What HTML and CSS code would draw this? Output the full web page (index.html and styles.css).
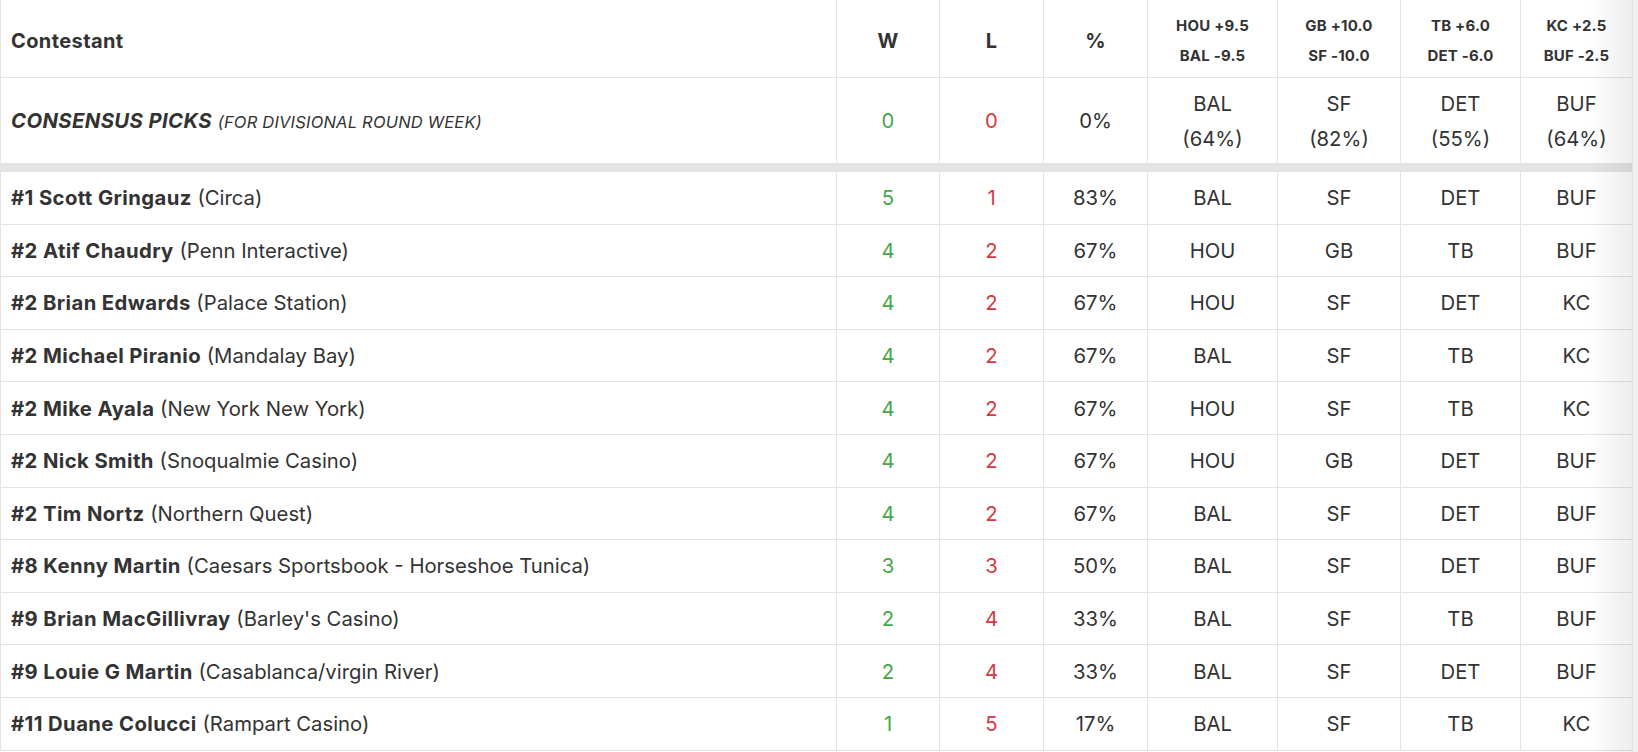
FILE: index.html
```html
<!DOCTYPE html>
<html>
<head>
<meta charset="utf-8">
<link rel="stylesheet" href="styles.css">
</head>
<body>
<div class="page">
  <div class="scroller">
    <table class="board">
      <colgroup>
        <col class="c-name"><col class="c-w"><col class="c-l"><col class="c-p">
        <col class="c-g1"><col class="c-g2"><col class="c-g3"><col class="c-g4">
      </colgroup>
      <thead>
        <tr class="head">
          <th class="name">Contestant</th>
          <th>W</th>
          <th>L</th>
          <th>%</th>
          <th class="line"><span>HOU +9.5</span><span>BAL -9.5</span></th>
          <th class="line"><span>GB +10.0</span><span>SF -10.0</span></th>
          <th class="line"><span>TB +6.0</span><span>DET -6.0</span></th>
          <th class="line"><span>KC +2.5</span><span>BUF -2.5</span></th>
        </tr>
      </thead>
      <tbody>
        <tr class="consensus">
          <td class="name"><b>CONSENSUS PICKS</b> <small>(FOR DIVISIONAL ROUND WEEK)</small></td>
          <td class="win">0</td>
          <td class="loss">0</td>
          <td>0%</td>
          <td class="pick2"><span>BAL</span><span>(64%)</span></td>
          <td class="pick2"><span>SF</span><span>(82%)</span></td>
          <td class="pick2"><span>DET</span><span>(55%)</span></td>
          <td class="pick2"><span>BUF</span><span>(64%)</span></td>
        </tr>
        <tr><td class="name"><b>#1 Scott Gringauz</b> (Circa)</td><td class="win">5</td><td class="loss">1</td><td>83%</td><td>BAL</td><td>SF</td><td>DET</td><td>BUF</td></tr>
        <tr><td class="name"><b>#2 Atif Chaudry</b> (Penn Interactive)</td><td class="win">4</td><td class="loss">2</td><td>67%</td><td>HOU</td><td>GB</td><td>TB</td><td>BUF</td></tr>
        <tr><td class="name"><b>#2 Brian Edwards</b> (Palace Station)</td><td class="win">4</td><td class="loss">2</td><td>67%</td><td>HOU</td><td>SF</td><td>DET</td><td>KC</td></tr>
        <tr><td class="name"><b>#2 Michael Piranio</b> (Mandalay Bay)</td><td class="win">4</td><td class="loss">2</td><td>67%</td><td>BAL</td><td>SF</td><td>TB</td><td>KC</td></tr>
        <tr><td class="name"><b>#2 Mike Ayala</b> (New York New York)</td><td class="win">4</td><td class="loss">2</td><td>67%</td><td>HOU</td><td>SF</td><td>TB</td><td>KC</td></tr>
        <tr><td class="name"><b>#2 Nick Smith</b> (Snoqualmie Casino)</td><td class="win">4</td><td class="loss">2</td><td>67%</td><td>HOU</td><td>GB</td><td>DET</td><td>BUF</td></tr>
        <tr><td class="name"><b>#2 Tim Nortz</b> (Northern Quest)</td><td class="win">4</td><td class="loss">2</td><td>67%</td><td>BAL</td><td>SF</td><td>DET</td><td>BUF</td></tr>
        <tr><td class="name"><b>#8 Kenny Martin</b> (Caesars Sportsbook - Horseshoe Tunica)</td><td class="win">3</td><td class="loss">3</td><td>50%</td><td>BAL</td><td>SF</td><td>DET</td><td>BUF</td></tr>
        <tr><td class="name"><b>#9 Brian MacGillivray</b> (Barley's Casino)</td><td class="win">2</td><td class="loss">4</td><td>33%</td><td>BAL</td><td>SF</td><td>TB</td><td>BUF</td></tr>
        <tr><td class="name"><b>#9 Louie G Martin</b> (Casablanca/virgin River)</td><td class="win">2</td><td class="loss">4</td><td>33%</td><td>BAL</td><td>SF</td><td>DET</td><td>BUF</td></tr>
        <tr><td class="name"><b>#11 Duane Colucci</b> (Rampart Casino)</td><td class="win">1</td><td class="loss">5</td><td>17%</td><td>BAL</td><td>SF</td><td>TB</td><td>KC</td></tr>
      </tbody>
    </table>
    <div class="fade"></div>
  </div>
  <div class="track"></div>
</div>
</body>
</html>
```

FILE: styles.css
```css
html, body {
  margin: 0;
  padding: 0;
  background: #ffffff;
}
body {
  font-family: Inter, "Noto Sans", "Liberation Sans", sans-serif;
  color: #333333;
  overflow: hidden;
}
.page {
  display: flex;
  width: 1638px;
  height: 752px;
  overflow: hidden;
}
.scroller {
  position: relative;
  width: 1632px;
  flex: none;
}
.track {
  flex: 1;
  background: #efefef;
  border-left: 1px solid #d9d9d9;
}
.fade {
  position: absolute;
  top: 0;
  right: 0;
  bottom: 0;
  width: 44px;
  background: linear-gradient(to right, rgba(0,0,0,0), rgba(0,0,0,0.07));
  pointer-events: none;
}
.board {
  width: 1632px;
  table-layout: fixed;
  border-collapse: collapse;
  font-size: 20.3px;
}
.c-name { width: 836px; }
.c-w { width: 103px; }
.c-l { width: 104px; }
.c-p { width: 104px; }
.c-g1 { width: 130px; }
.c-g2 { width: 123px; }
.c-g3 { width: 120px; }
.c-g4 { width: 112px; }

.board th, .board td {
  border: 1px solid #e4e4e4;
  text-align: center;
  vertical-align: middle;
  padding: 0 6px;
  white-space: nowrap;
}
.board tr:first-child th { border-top: none; }
.board .name {
  text-align: left;
  padding-left: 10px;
}
.head th {
  height: 72px;
  padding-top: 5px;
  font-weight: 700;
  font-size: 20px;
  letter-spacing: 0.4px;
}
.head th.line {
  font-size: 15px;
  letter-spacing: 0.2px;
}
.head th.line span {
  display: block;
  line-height: 30px;
}
.consensus .name b {
  font-style: italic;
  font-weight: 700;
  letter-spacing: 0.4px;
}
.consensus .name small {
  font-style: italic;
  font-size: 16.5px;
  letter-spacing: 0.2px;
}
.pick2 span {
  display: block;
  line-height: 35px;
}
.board tbody tr td {
  height: 51.6px;
}
.board tbody tr.consensus td {
  height: 85px;
  border-bottom: 9px solid #e4e4e4;
}
.name b {
  font-weight: 700;
  letter-spacing: 0.4px;
}
.win { color: #45a748; }
.loss { color: #d63a42; }
```
